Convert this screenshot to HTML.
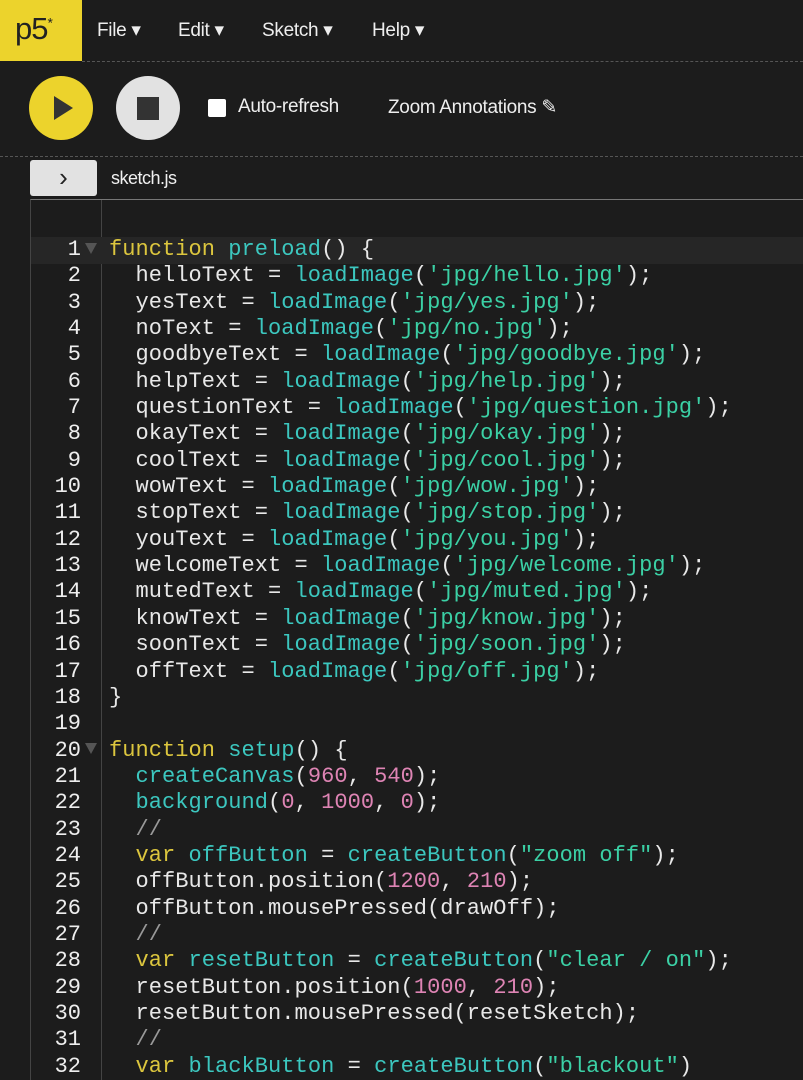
<!DOCTYPE html>
<html><head><meta charset="utf-8"><style>
*{margin:0;padding:0;box-sizing:border-box}
body{width:803px;height:1080px;background:#1c1c1c;overflow:hidden;font-family:"Liberation Sans",sans-serif;color:#f0f0f0;position:relative}
.logo{position:absolute;left:0;top:0;width:82px;height:61px;background:#ecd32c;color:#222;font-size:31px;padding:11px 0 0 15px;letter-spacing:-1px}
.logo sup{font-size:14px}
.menu{position:absolute;top:19px;font-size:19px;color:#eee;letter-spacing:-0.3px}
.dash{position:absolute;left:82px;right:0;border-top:1px dashed #555}
.btn{position:absolute;top:76px;width:64px;height:64px;border-radius:50%}
.code{position:absolute;left:109px;top:237px;font-family:"Liberation Mono",monospace;font-size:22px;line-height:26.35px;white-space:pre;color:#e8e8e8;letter-spacing:0.05px}
.nums{position:absolute;left:30px;width:51px;top:237px;font-family:"Liberation Mono",monospace;font-size:22px;line-height:26.35px;text-align:right;color:#eee}
.k{color:#dcc63e}.f{color:#3cc7bf}.s{color:#3bd0a5}.n{color:#de84b4}.c{color:#999}
</style></head><body>
<div class="logo">p5<sup>*</sup></div>
<div class="menu" style="left:97px">File ▾</div>
<div class="menu" style="left:178px">Edit ▾</div>
<div class="menu" style="left:262px">Sketch ▾</div>
<div class="menu" style="left:372px">Help ▾</div>
<div class="dash" style="top:61px"></div>
<div class="btn" style="left:29px;background:#ecd32c"><div style="position:absolute;left:25px;top:20px;border-left:19px solid #333;border-top:12px solid transparent;border-bottom:12px solid transparent"></div></div>
<div class="btn" style="left:116px;background:#e2e2e2"><div style="position:absolute;left:21px;top:21px;width:22px;height:23px;background:#333"></div></div>
<div style="position:absolute;left:208px;top:99px;width:18px;height:18px;background:#fff;border-radius:2px"></div>
<div class="menu" style="left:238px;top:96px">Auto-refresh</div>
<div class="menu" style="left:388px;top:96px">Zoom Annotations ✎</div>
<div style="position:absolute;left:0;right:0;top:156px;border-top:1px dashed #555"></div>
<div style="position:absolute;left:30px;top:160px;width:67px;height:36px;background:#e2e2e2;border-radius:3px;color:#222;font-size:26px;text-align:center;line-height:34px">›</div>
<div style="position:absolute;left:111px;top:168px;font-size:18px;letter-spacing:-0.5px">sketch.js</div>
<div style="position:absolute;left:30px;right:0;top:199px;bottom:0;border-top:1px solid #777;border-left:1px solid #444"></div>
<div style="position:absolute;left:101px;top:200px;bottom:0;border-left:1px solid #444"></div>
<div style="position:absolute;left:31px;right:0;top:237px;height:27px;background:#262626"></div>
<div class="nums">1<br>2<br>3<br>4<br>5<br>6<br>7<br>8<br>9<br>10<br>11<br>12<br>13<br>14<br>15<br>16<br>17<br>18<br>19<br>20<br>21<br>22<br>23<br>24<br>25<br>26<br>27<br>28<br>29<br>30<br>31<br>32</div>
<div style="position:absolute;left:85px;top:243px;border-top:11px solid #555;border-left:6px solid transparent;border-right:6px solid transparent"></div>
<div style="position:absolute;left:85px;top:743px;border-top:11px solid #555;border-left:6px solid transparent;border-right:6px solid transparent"></div>
<div class="code"><span class="k">function</span> <span class="f">preload</span>() {
  helloText = <span class="f">loadImage</span>(<span class="s">'jpg/hello.jpg'</span>);
  yesText = <span class="f">loadImage</span>(<span class="s">'jpg/yes.jpg'</span>);
  noText = <span class="f">loadImage</span>(<span class="s">'jpg/no.jpg'</span>);
  goodbyeText = <span class="f">loadImage</span>(<span class="s">'jpg/goodbye.jpg'</span>);
  helpText = <span class="f">loadImage</span>(<span class="s">'jpg/help.jpg'</span>);
  questionText = <span class="f">loadImage</span>(<span class="s">'jpg/question.jpg'</span>);
  okayText = <span class="f">loadImage</span>(<span class="s">'jpg/okay.jpg'</span>);
  coolText = <span class="f">loadImage</span>(<span class="s">'jpg/cool.jpg'</span>);
  wowText = <span class="f">loadImage</span>(<span class="s">'jpg/wow.jpg'</span>);
  stopText = <span class="f">loadImage</span>(<span class="s">'jpg/stop.jpg'</span>);
  youText = <span class="f">loadImage</span>(<span class="s">'jpg/you.jpg'</span>);
  welcomeText = <span class="f">loadImage</span>(<span class="s">'jpg/welcome.jpg'</span>);
  mutedText = <span class="f">loadImage</span>(<span class="s">'jpg/muted.jpg'</span>);
  knowText = <span class="f">loadImage</span>(<span class="s">'jpg/know.jpg'</span>);
  soonText = <span class="f">loadImage</span>(<span class="s">'jpg/soon.jpg'</span>);
  offText = <span class="f">loadImage</span>(<span class="s">'jpg/off.jpg'</span>);
}

<span class="k">function</span> <span class="f">setup</span>() {
  <span class="f">createCanvas</span>(<span class="n">960</span>, <span class="n">540</span>);
  <span class="f">background</span>(<span class="n">0</span>, <span class="n">1000</span>, <span class="n">0</span>);
  <span class="c">//</span>
  <span class="k">var</span> <span class="f">offButton</span> = <span class="f">createButton</span>(<span class="s">"zoom off"</span>);
  offButton.position(<span class="n">1200</span>, <span class="n">210</span>);
  offButton.mousePressed(drawOff);
  <span class="c">//</span>
  <span class="k">var</span> <span class="f">resetButton</span> = <span class="f">createButton</span>(<span class="s">"clear / on"</span>);
  resetButton.position(<span class="n">1000</span>, <span class="n">210</span>);
  resetButton.mousePressed(resetSketch);
  <span class="c">//</span>
  <span class="k">var</span> <span class="f">blackButton</span> = <span class="f">createButton</span>(<span class="s">"blackout"</span>)</div>
</body></html>
